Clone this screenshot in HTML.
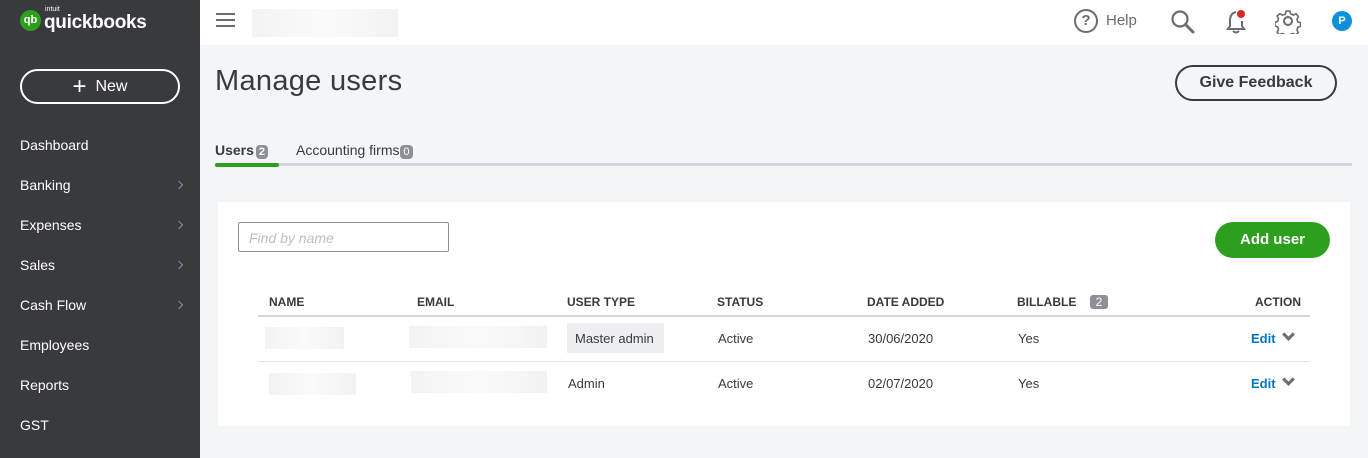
<!DOCTYPE html>
<html><head><style>
*{margin:0;padding:0;box-sizing:border-box}
body{width:1368px;height:458px;overflow:hidden;font-family:"Liberation Sans",sans-serif;background:#f4f5f8;position:relative;color:#393a3d}
.sb{position:absolute;left:0;top:0;width:200px;height:458px;background:#393a3d;color:#fff}
.abs{position:absolute}
.nav{position:absolute;left:20px;font-size:14px;color:#fff}
.chev{position:absolute;left:176px;width:6px;height:6px;border-right:1.5px solid #8d9096;border-top:1.5px solid #8d9096;transform:rotate(45deg)}
.top{position:absolute;left:200px;top:0;width:1168px;height:45px;background:#fff}
.th{position:absolute;top:295px;font-size:12px;font-weight:bold;color:#393a3d}
.td{position:absolute;font-size:13px;color:#393a3d}
.blur{position:absolute;background:linear-gradient(90deg,#f3f3f3,#fafafa,#f2f2f2);height:22px}
.edit{position:absolute;left:1251px;font-size:13px;color:#0077c5;font-weight:bold}
.dd{position:absolute;left:1284px;width:9px;height:9px;border-right:3px solid #6b6c72;border-bottom:3px solid #6b6c72;transform:rotate(45deg)}
</style></head><body>
<div class="sb">
 <div class="abs" style="left:20px;top:10px;width:21px;height:21px;border-radius:50%;background:#2ca01c;color:#fff;font-size:11px;font-weight:bold;text-align:center;line-height:21px">qb</div>
 <div class="abs" style="left:45px;top:6px;font-size:7px;color:#fff">intuit</div>
 <div class="abs" style="left:44px;top:12px;font-size:19px;font-weight:bold;color:#fff;letter-spacing:-0.3px">quickbooks</div>
 <div class="abs" style="left:20px;top:69px;width:160px;height:35px;border:2px solid #fff;border-radius:18px;font-size:16px;text-align:center;line-height:31px"><span style="font-size:24px;vertical-align:-3px;font-weight:300">+</span>&nbsp; New</div>
 <div class="nav" style="top:137px">Dashboard</div>
 <div class="nav" style="top:177px">Banking</div><div class="chev" style="top:182px"></div>
 <div class="nav" style="top:217px">Expenses</div><div class="chev" style="top:222px"></div>
 <div class="nav" style="top:257px">Sales</div><div class="chev" style="top:262px"></div>
 <div class="nav" style="top:297px">Cash Flow</div><div class="chev" style="top:302px"></div>
 <div class="nav" style="top:337px">Employees</div>
 <div class="nav" style="top:377px">Reports</div>
 <div class="nav" style="top:417px">GST</div>
</div>
<div class="top">
 <div class="abs" style="left:16px;top:13px;width:19px;height:2px;background:#6b6c72;box-shadow:0 6px 0 #6b6c72,0 12px 0 #6b6c72"></div>
 <div class="blur" style="left:52px;top:9px;width:146px;height:28px"></div>
 <div class="abs" style="left:874px;top:9px;width:24px;height:24px;border:2px solid #6b6c72;border-radius:50%;text-align:center;font-size:15px;font-weight:bold;line-height:20px;color:#6b6c72">?</div>
 <div class="abs" style="left:906px;top:12px;font-size:15px;color:#6b6c72">Help</div>
 <svg class="abs" style="left:970px;top:9px" width="26" height="26"><circle cx="10" cy="10" r="7.5" fill="none" stroke="#6b6c72" stroke-width="2.2"/><line x1="15.5" y1="15.5" x2="23" y2="23" stroke="#6b6c72" stroke-width="3" stroke-linecap="round"/></svg>
 <svg class="abs" style="left:1025px;top:8px" width="26" height="28"><path d="M11 4 C6 5 5 9 5 13 L5 18 L3 21 L19 21 L17 18 L17 13" fill="none" stroke="#6b6c72" stroke-width="2"/><path d="M8 23 Q11 26 14 23" fill="none" stroke="#6b6c72" stroke-width="2"/><circle cx="16" cy="6" r="4" fill="#d52b1e"/></svg>
 <svg class="abs" style="left:1075px;top:8px" width="26" height="26" viewBox="0 0 26 26"><circle cx="13" cy="13" r="4" fill="none" stroke="#6b6c72" stroke-width="2"/><path d="M11 2h4l1 3 3 1.5 3-1.5 2.5 3-1.5 3 1 3 3 1v4l-3 1-1 3 1.5 3-3 2.5-3-1.5-3 1-1 3h-4l-1-3-3-1-3 1.5-2.5-3 1.5-3-1-3-3-1v-4l3-1 1-3-1.5-3 3-2.5 3 1.5 3-1z" transform="scale(0.9) translate(1.4 1.4)" fill="none" stroke="#6b6c72" stroke-width="1.8"/></svg>
 <div class="abs" style="left:1132px;top:11px;width:20px;height:20px;border-radius:50%;background:#0d8fdc;color:#fff;font-size:11px;font-weight:bold;text-align:center;line-height:20px">P</div>
</div>
<div class="abs" style="left:215px;top:65px;font-size:29px;color:#393a3d;letter-spacing:0.3px">Manage users</div>
<div class="abs" style="left:1175px;top:65px;width:162px;height:36px;border:2px solid #393a3d;border-radius:18px;font-size:16px;font-weight:bold;text-align:center;line-height:32px">Give Feedback</div>
<div class="abs" style="left:215px;top:142px;font-size:14px;font-weight:bold">Users <span style="display:inline-block;background:#8d9096;color:#fff;border-radius:4px;font-size:11px;padding:0 3px;line-height:14px;margin-left:-2px">2</span></div>
<div class="abs" style="left:296px;top:142px;font-size:14px">Accounting firms <span style="display:inline-block;background:#8d9096;color:#fff;border-radius:4px;font-size:11px;padding:0 3px;line-height:14px;margin-left:-3px">0</span></div>
<div class="abs" style="left:215px;top:163px;width:1137px;height:3px;background:#d4d7dc"></div>
<div class="abs" style="left:215px;top:163px;width:64px;height:4px;background:#2ca01c;border-radius:2px"></div>
<div class="abs" style="left:218px;top:202px;width:1132px;height:224px;background:#fff"></div>
<div class="abs" style="left:238px;top:222px;width:211px;height:30px;border:1px solid #8d9096;border-radius:2px;font-size:14px;font-style:italic;color:#babec5;padding:7px 10px">Find by name</div>
<div class="abs" style="left:1215px;top:222px;width:115px;height:36px;border-radius:18px;background:#2ca01c;color:#fff;font-size:15px;font-weight:bold;text-align:center;line-height:36px">Add user</div>
<div class="th" style="left:269px">NAME</div>
<div class="th" style="left:417px">EMAIL</div>
<div class="th" style="left:567px">USER TYPE</div>
<div class="th" style="left:717px">STATUS</div>
<div class="th" style="left:867px">DATE ADDED</div>
<div class="th" style="left:1017px">BILLABLE <span style="display:inline-block;background:#8d9096;color:#fff;border-radius:3px;padding:0 6px;margin-left:10px;font-weight:normal">2</span></div>
<div class="th" style="left:1255px">ACTION</div>
<div class="abs" style="left:258px;top:315px;width:1052px;height:2px;background:#d4d7dc"></div>
<div class="abs" style="left:258px;top:361px;width:1052px;height:1px;background:#e3e5e8"></div>
<div class="blur" style="left:265px;top:327px;width:79px"></div>
<div class="blur" style="left:409px;top:326px;width:138px"></div>
<div class="abs" style="left:567px;top:323px;width:97px;height:30px;background:#eceef1;font-size:13px;padding:8px 0 0 8px">Master admin</div>
<div class="td" style="left:718px;top:331px">Active</div>
<div class="td" style="left:868px;top:331px">30/06/2020</div>
<div class="td" style="left:1018px;top:331px">Yes</div>
<div class="edit" style="top:331px">Edit</div><div class="dd" style="top:330px"></div>
<div class="blur" style="left:269px;top:373px;width:87px"></div>
<div class="blur" style="left:411px;top:371px;width:136px"></div>
<div class="td" style="left:568px;top:376px">Admin</div>
<div class="td" style="left:718px;top:376px">Active</div>
<div class="td" style="left:868px;top:376px">02/07/2020</div>
<div class="td" style="left:1018px;top:376px">Yes</div>
<div class="edit" style="top:376px">Edit</div><div class="dd" style="top:375px"></div>
</body></html>
